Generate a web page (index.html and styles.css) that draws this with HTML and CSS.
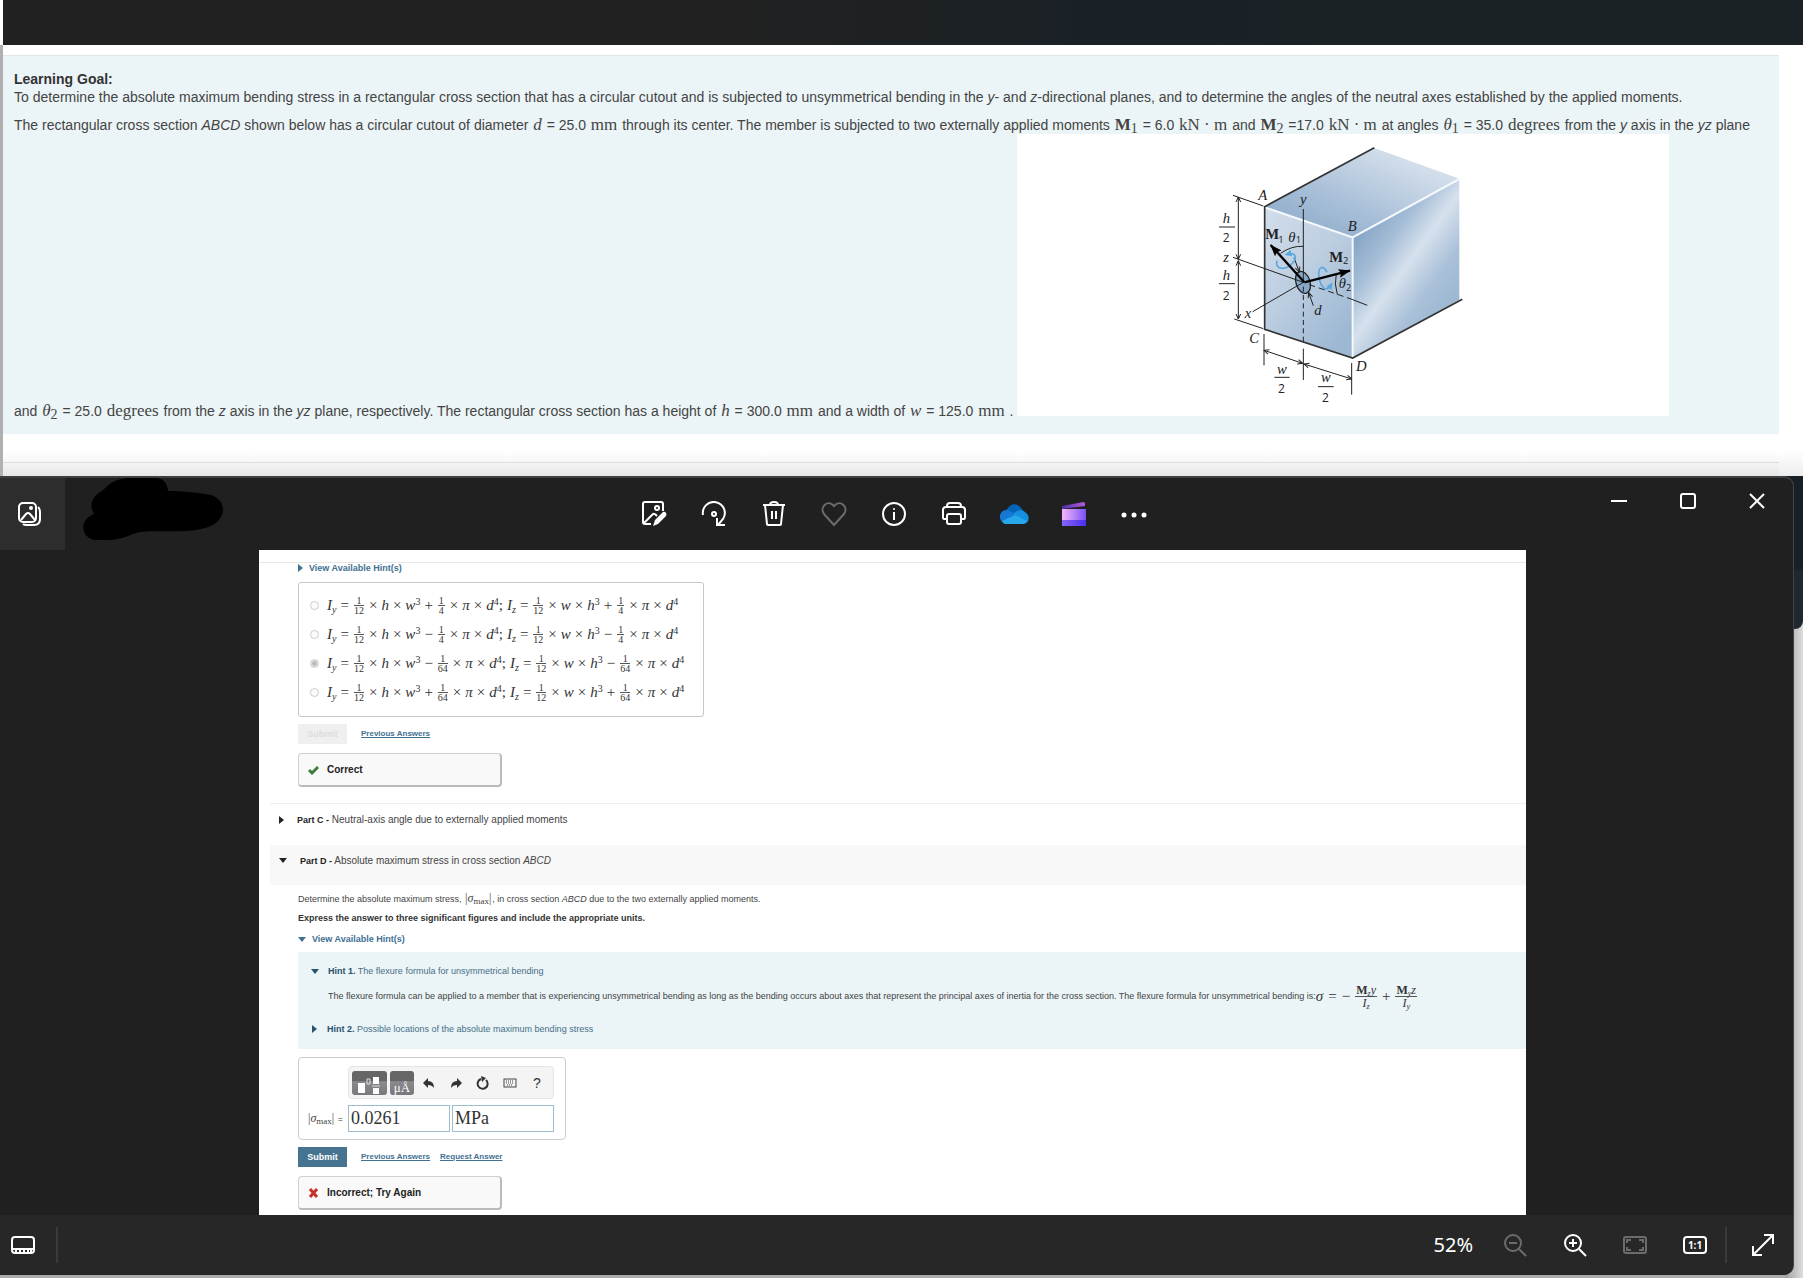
FILE: index.html
```html
<!DOCTYPE html>
<html lang="en">
<head>
<meta charset="utf-8">
<title>Unsymmetrical bending</title>
<link rel="stylesheet" href="styles.css">
</head>
<body>
<div class="browser-bar"></div>
<section class="problem-page">
  <div class="problem">
    <h1>Learning Goal:</h1>
    <p>To determine the absolute maximum bending stress in a rectangular cross section that has a circular cutout and is subjected to unsymmetrical bending in the <i>y</i>- and <i>z</i>-directional planes, and to determine the angles of the neutral axes established by the applied moments.</p>
    <p class="statement">The rectangular cross section <i>ABCD</i> shown below has a circular cutout of diameter <span class="m"><i>d</i></span> = 25.0 <span class="m">mm</span> through its center. The member is subjected to two externally applied moments <span class="m"><b>M</b><sub>1</sub></span> = 6.0 <span class="m">kN · m</span> and <span class="m"><b>M</b><sub>2</sub></span> =17.0 <span class="m">kN · m</span> at angles <span class="m"><i>θ</i><sub>1</sub></span> = 35.0 <span class="m">degrees</span> from the <i>y</i> axis in the <i>yz</i> plane<br>and <span class="m"><i>θ</i><sub>2</sub></span> = 25.0 <span class="m">degrees</span> from the <i>z</i> axis in the <i>yz</i> plane, respectively. The rectangular cross section has a height of <span class="m"><i>h</i></span> = 300.0 <span class="m">mm</span> and a width of <span class="m"><i>w</i></span> = 125.0 <span class="m">mm</span> .
      <svg class="figure" viewBox="-537 12 1956 846" role="img" aria-label="Rectangular beam with circular cutout">
        <defs>
          <linearGradient id="top" x1="0" y1="1" x2="1" y2="0"><stop offset="0" stop-color="#86a6c6"/><stop offset=".35" stop-color="#a4bcd6"/><stop offset=".8" stop-color="#d3deeb"/><stop offset="1" stop-color="#b4c7dc"/></linearGradient>
          <linearGradient id="front" x1="0" y1="0" x2=".7" y2="1"><stop offset="0" stop-color="#d2deeb"/><stop offset=".5" stop-color="#bdcee1"/><stop offset="1" stop-color="#9db8d3"/></linearGradient>
          <linearGradient id="side" gradientUnits="userSpaceOnUse" x1="490" y1="310" x2="780" y2="520"><stop offset="0" stop-color="#86a6c7"/><stop offset=".25" stop-color="#a6bed7"/><stop offset=".48" stop-color="#d6e1ed"/><stop offset=".75" stop-color="#a9c0d8"/><stop offset="1" stop-color="#9cb7d2"/></linearGradient>
          <marker id="thin" viewBox="0 0 20 20" refX="18" refY="10" markerWidth="20" markerHeight="20" markerUnits="userSpaceOnUse" orient="auto-start-reverse"><path d="M3 3L18 10L3 17" fill="none" stroke="#222" stroke-width="3"/></marker>
          <marker id="bold" viewBox="0 0 36 26" refX="34" refY="13" markerWidth="36" markerHeight="26" markerUnits="userSpaceOnUse" orient="auto"><path d="M0 0L36 13L0 26L6 13z" fill="#000"/></marker>
          <marker id="blue" viewBox="0 0 24 22" refX="12" refY="11" markerWidth="22" markerHeight="22" markerUnits="userSpaceOnUse" orient="auto"><path d="M0 0L24 11L0 22z" fill="#5aa9de"/></marker>
        </defs>
        <path d="M206 230L535 54L790 146L470 320z" fill="url(#top)"/>
        <path d="M206 230L470 320V684L206 598z" fill="url(#front)"/>
        <path d="M470 320L790 146V510L470 684z" fill="url(#side)"/>
        <path d="M206 232L470 322L790 147M470 322V684" fill="none" stroke="#f4f8fb" stroke-width="6"/>
        <g fill="none" stroke="#333" stroke-width="5"><path d="M535 53L206 230V598L470 684L799 508"/></g>
        <ellipse cx="321" cy="457" rx="21" ry="34" transform="rotate(-18 321 457)" fill="#87a8c9" stroke="#222" stroke-width="4"/>
        <g fill="none" stroke="#222" stroke-width="3">
          <path d="M111 196L202 228M111 382L322 457L170 545M115 567L202 596M322 237V457M204 612V706M322 656V750M467 699V794"/>
          <path d="M322 470V640" stroke-dasharray="15 10"/><path d="M340 464L465 507" stroke-dasharray="18 12"/><path d="M465 507L514 526"/>
          <path d="M254 370Q286 347 322 349M421 430Q414 462 424 494"/>
          <path d="M127 201V388" marker-start="url(#thin)" marker-end="url(#thin)"/><path d="M127 392V567" marker-start="url(#thin)" marker-end="url(#thin)"/>
          <path d="M204 661L320 700" marker-start="url(#thin)" marker-end="url(#thin)"/><path d="M324 702L467 747" marker-start="url(#thin)" marker-end="url(#thin)"/>
          <path d="M294 383L310 426" marker-end="url(#thin)"/><path d="M352 527L338 488" marker-end="url(#thin)"/>
          <path d="M69 291H117M69 461H117M235 742H281M366 770H413"/>
        </g>
        <g fill="none" stroke="#5aa9de" stroke-width="5"><path d="M243 392C236 420 268 421 287 402C306 383 298 366 276 372" marker-end="url(#blue)"/><path d="M393 426C380 401 365 413 369 440C373 470 390 490 404 466" marker-end="url(#blue)"/></g>
        <g fill="none" stroke="#000" stroke-width="7"><path d="M325 457L224 345" marker-end="url(#bold)"/><path d="M325 457L462 422" marker-end="url(#bold)"/></g>
        <g class="fig-label" font-size="44">
          <g font-style="italic"><text x="187" y="209">A</text><text x="455" y="303">B</text><text x="160" y="638">C</text><text x="480" y="722">D</text><text x="312" y="222">y</text><text x="82" y="395">z</text><text x="146" y="563">x</text><text x="355" y="554">d</text><text x="80" y="280">h</text><text x="80" y="451">h</text><text x="243" y="731">w</text><text x="375" y="757">w</text><text x="277" y="335">θ</text><text x="428" y="474">θ</text></g>
          <text x="208" y="328" font-weight="bold">M</text><text x="400" y="397" font-weight="bold">M</text>
          <g class="fig-num"><text x="80" y="337">2</text><text x="80" y="509">2</text><text x="246" y="789">2</text><text x="378" y="817">2</text><g class="fig-sub"><text x="247" y="338">1</text><text x="299" y="340">1</text><text x="441" y="403">2</text><text x="450" y="482">2</text></g></g>
        </g>
      </svg></p>
  </div>
  <div class="next-part"></div>
</section>

<div class="desktop">
<main class="viewer">
  <header class="viewer-head">
    <div class="head-left">
      <button class="tab" aria-label="Gallery"><svg width="24" height="26" viewBox="0 0 24 26"><rect x="2" y="2" width="17" height="19" rx="4"/><path d="M4 19l5-6q2-2 4 0l5 6M21 6q2 2 2 5v7q0 6-6 6H10q-3 0-4-1"/><circle cx="14" cy="7" r="1" fill="#fff"/></svg></button>
      <svg class="scribble" width="142" height="62" viewBox="82 477 142 62"><path d="M94 513C89 505 91 496 102 490C110 482 117 477 130 477L156 477C163 477 168 483 168 490C184 490 199 492 211 494C228 500 226 518 211 525C192 533 164 529 140 531C130 533 123 539 108 539L96 539C82 538 77 520 94 513z" fill="#000"/></svg>
    </div>
    <div class="tools">
      <button aria-label="Edit"><svg width="26" height="26" viewBox="0 0 26 26"><path d="M10 23H4q-2 0-2-2V3q0-2 2-2h16q2 0 2 2v7M3 22l9-9q1-1 3 1l1 1"/><circle cx="16" cy="7" r="2"/><path d="M12 25l2-6 8-8q2-1 3 1 1 1 0 3l-8 8z" fill="#fff" stroke="none"/></svg></button>
      <button aria-label="Rotate"><svg width="26" height="26" viewBox="0 0 26 26"><path d="M2 14A11 11 0 1 1 22 18L17 24M16 17v7h8"/><circle cx="13" cy="13" r="2"/></svg></button>
      <button aria-label="Delete"><svg width="26" height="26" viewBox="0 0 26 26"><path d="M2 4h22M9 4q0-3 4-3t4 3M4 4l2 19q0 1 2 1h10q2 0 2-1l2-19M11 10v8M15 10v8"/></svg></button>
      <button class="dim" aria-label="Favorite"><svg width="26" height="26" viewBox="0 0 26 26"><path d="M13 24L3 13C-2 6 7-2 13 5C19-2 28 6 23 13z"/></svg></button>
      <button aria-label="Info"><svg width="26" height="26" viewBox="0 0 26 26"><circle cx="13" cy="13" r="11"/><path d="M13 11v8"/><circle cx="13" cy="8" r="1" stroke="none" fill="#fff"/></svg></button>
      <button aria-label="Print"><svg width="26" height="26" viewBox="0 0 26 26"><path d="M6 18H3q-1 0-1-2V9q0-3 3-3h16q3 0 3 3v7q0 2-1 2h-3M6 5q0-3 3-3h8q3 0 3 3"/><rect x="6" y="13" width="14" height="10" rx="2"/></svg></button>
      <button aria-label="OneDrive"><svg width="30" height="22" viewBox="0 0 30 22"><path d="M7 8C11-1 20-1 24 8L16 15z" fill="#0364b8" stroke="none"/><path d="M6 20C-1 19-1 8 7 7q4 0 7 3l8 5-9 5z" fill="#1478d4" stroke="none"/><path d="M14 11q7-7 12-2c6 4 4 11-1 12z" fill="#1490df" stroke="none"/><path d="M3 18L16 12l12 6q-2 3-4 3H6q-2 0-3-3z" fill="#28a8ea" stroke="none"/></svg></button>
      <button aria-label="Clipchamp"><svg width="26" height="26" viewBox="0 0 26 26"><defs><linearGradient id="clip" x2="1"><stop stop-color="#f3b5fb"/><stop offset=".5" stop-color="#b887f7"/><stop offset="1" stop-color="#7a50f5"/></linearGradient><linearGradient id="lid" x2="1"><stop stop-color="#4b2fa8"/><stop offset="1" stop-color="#b55ae0"/></linearGradient><linearGradient id="low" x2="1"><stop stop-color="#8765f8"/><stop offset="1" stop-color="#4a2fee"/></linearGradient></defs><path d="M1 5L22 1q2 0 2 2v2L1 8z" fill="url(#lid)" stroke="none"/><path d="M1 8h24v11H1z" fill="url(#clip)" stroke="none"/><path d="M1 19h24v6H1z" fill="url(#low)" stroke="none"/></svg></button>
      <button aria-label="More"><svg width="26" height="26" viewBox="0 0 26 26"><g fill="#fff" stroke="none"><circle cx="3" cy="14" r="2.500"/><circle cx="13" cy="14" r="2.500"/><circle cx="23" cy="14" r="2.500"/></g></svg></button>
    </div>
    <div class="window-controls">
      <button aria-label="Minimize"><svg width="16" height="16" viewBox="0 0 16 16"><path d="M0 8h16"/></svg></button>
      <button aria-label="Maximize"><svg width="16" height="16" viewBox="0 0 16 16"><rect x="1" y="1" width="14" height="14" rx="2"/></svg></button>
      <button aria-label="Close"><svg width="16" height="16" viewBox="0 0 16 16"><path d="M1 1l14 14M15 1L1 15"/></svg></button>
    </div>
  </header>

  <div class="stage">
    <article class="sheet">
      <div class="rule-top"></div>
      <div class="col">
        <a class="hints" href="#"><span class="tri right"></span>View Available Hint(s)</a>
        <form class="choices">
          <label><input type="radio" name="c" disabled><span class="eq"><span><i>I</i><sub><i>y</i></sub></span><span>=</span><span class="frac"><span>1</span><span>12</span></span><span>×</span><i>h</i><span>×</span><span><i>w</i><sup>3</sup></span><span>+</span><span class="frac"><span>1</span><span>4</span></span><span>×</span><i>π</i><span>×</span><span><i>d</i><sup>4</sup>;</span><span><i>I</i><sub><i>z</i></sub></span><span>=</span><span class="frac"><span>1</span><span>12</span></span><span>×</span><i>w</i><span>×</span><span><i>h</i><sup>3</sup></span><span>+</span><span class="frac"><span>1</span><span>4</span></span><span>×</span><i>π</i><span>×</span><span><i>d</i><sup>4</sup></span></span></label>
          <label><input type="radio" name="c" disabled><span class="eq"><span><i>I</i><sub><i>y</i></sub></span><span>=</span><span class="frac"><span>1</span><span>12</span></span><span>×</span><i>h</i><span>×</span><span><i>w</i><sup>3</sup></span><span>−</span><span class="frac"><span>1</span><span>4</span></span><span>×</span><i>π</i><span>×</span><span><i>d</i><sup>4</sup>;</span><span><i>I</i><sub><i>z</i></sub></span><span>=</span><span class="frac"><span>1</span><span>12</span></span><span>×</span><i>w</i><span>×</span><span><i>h</i><sup>3</sup></span><span>−</span><span class="frac"><span>1</span><span>4</span></span><span>×</span><i>π</i><span>×</span><span><i>d</i><sup>4</sup></span></span></label>
          <label><input type="radio" name="c" disabled checked><span class="eq"><span><i>I</i><sub><i>y</i></sub></span><span>=</span><span class="frac"><span>1</span><span>12</span></span><span>×</span><i>h</i><span>×</span><span><i>w</i><sup>3</sup></span><span>−</span><span class="frac"><span>1</span><span>64</span></span><span>×</span><i>π</i><span>×</span><span><i>d</i><sup>4</sup>;</span><span><i>I</i><sub><i>z</i></sub></span><span>=</span><span class="frac"><span>1</span><span>12</span></span><span>×</span><i>w</i><span>×</span><span><i>h</i><sup>3</sup></span><span>−</span><span class="frac"><span>1</span><span>64</span></span><span>×</span><i>π</i><span>×</span><span><i>d</i><sup>4</sup></span></span></label>
          <label><input type="radio" name="c" disabled><span class="eq"><span><i>I</i><sub><i>y</i></sub></span><span>=</span><span class="frac"><span>1</span><span>12</span></span><span>×</span><i>h</i><span>×</span><span><i>w</i><sup>3</sup></span><span>+</span><span class="frac"><span>1</span><span>64</span></span><span>×</span><i>π</i><span>×</span><span><i>d</i><sup>4</sup>;</span><span><i>I</i><sub><i>z</i></sub></span><span>=</span><span class="frac"><span>1</span><span>12</span></span><span>×</span><i>w</i><span>×</span><span><i>h</i><sup>3</sup></span><span>+</span><span class="frac"><span>1</span><span>64</span></span><span>×</span><i>π</i><span>×</span><span><i>d</i><sup>4</sup></span></span></label>
        </form>
        <div class="actions"><button class="submit" disabled>Submit</button><a href="#">Previous Answers</a></div>
        <div class="feedback"><svg width="11" height="10" viewBox="0 0 11 10"><path d="M1 5l3 3 6-6" fill="none" stroke="#3f7d3a" class="check"/></svg>Correct</div>
      </div>

      <section class="part closed"><span class="tri right"></span><h2><b>Part C -</b> Neutral-axis angle due to externally applied moments</h2></section>
      <section class="part open"><span class="tri down"></span><h2><b>Part D -</b> Absolute maximum stress in cross section <i>ABCD</i></h2></section>

      <div class="col">
        <p class="ask">Determine the absolute maximum stress, <span class="m">|<i>σ</i><sub>max</sub>|</span>, in cross section <i>ABCD</i> due to the two externally applied moments.</p>
        <p class="express">Express the answer to three significant figures and include the appropriate units.</p>
        <a class="hints" href="#"><span class="tri down"></span>View Available Hint(s)</a>
        <div class="hint-box">
          <h3><span class="tri down"></span><span><b>Hint 1.</b> The flexure formula for unsymmetrical bending</span></h3>
          <div class="hint-text"><span>The flexure formula can be applied to a member that is experiencing unsymmetrical bending as long as the bending occurs about axes that represent the principal axes of inertia for the cross section. The flexure formula for unsymmetrical bending is:</span><span class="eq"><i>σ</i><span>=</span><span class="neg">−</span><span class="frac wide"><span><b>M</b><sub><i>z</i></sub><i>y</i></span><span><i>I</i><sub><i>z</i></sub></span></span><span>+</span><span class="frac wide"><span><b>M</b><sub><i>y</i></sub><i>z</i></span><span><i>I</i><sub><i>y</i></sub></span></span></span></div>
          <h3 class="shut"><span class="tri right"></span><span><b>Hint 2.</b> Possible locations of the absolute maximum bending stress</span></h3>
        </div>
        <form class="answer">
          <div class="editor">
            <button type="button" class="key wide-key" aria-label="Templates"><svg width="35" height="24" viewBox="0 0 35 24"><path d="M6 12h7v10H6zM21 6h6v7h-6zM21 17h6v6h-6z" fill="#fff"/><path class="line" d="M15 8h3v5h-3z"/><path class="line" d="M20 15h8"/></svg></button>
            <button type="button" class="key">μÅ</button>
            <button type="button" class="ico" aria-label="Undo"><svg width="12" height="12" viewBox="0 0 12 12"><path d="M5 1v3q6 0 6 7-2-3-6-3v3L0 6z" fill="#333"/></svg></button>
            <button type="button" class="ico" aria-label="Redo"><svg width="12" height="12" viewBox="0 0 12 12"><path d="M7 1v3q-6 0-6 7 2-3 6-3v3l5-5z" fill="#333"/></svg></button>
            <button type="button" class="ico" aria-label="Reset"><svg class="reset" width="14" height="14" viewBox="0 0 14 14"><path class="ring" d="M10 4a5 5 0 1 1-5-1"/><path d="M5 0l5 2-4 4z" fill="#333"/></svg></button>
            <button type="button" class="ico" aria-label="Keyboard"><svg class="kbd" width="14" height="10" viewBox="0 0 14 10"><rect x="1" y="1" width="12" height="8"/><path d="M3 3h8M3 5h8M4 7h6" stroke-dasharray="1 1"/></svg></button>
            <button type="button" class="ico help">?</button>
          </div>
          <label for="val"><span class="m">|<i>σ</i><sub>max</sub>|</span> =</label>
          <input id="val" value="0.0261"><input aria-label="Units" value="MPa">
        </form>
        <div class="actions"><button class="submit">Submit</button><a href="#">Previous Answers</a><a href="#">Request Answer</a></div>
        <div class="feedback"><svg width="11" height="10" viewBox="0 0 11 10"><path d="M2 1l7 8M9 1L2 9" fill="none" stroke="#c5302c" class="cross"/></svg>Incorrect; Try Again</div>
      </div>
    </article>
  </div>

  <footer class="viewer-foot">
    <button class="film" aria-label="Filmstrip"><svg width="26" height="20" viewBox="0 0 26 20"><rect x="2" y="2" width="22" height="16" rx="3"/><path d="M2 14h22M6 14v4M10 14v4M14 14v4M18 14v4M21 14v4"/></svg></button>
    <span class="bar"></span>
    <span class="zoom">52%</span>
    <button class="dim" aria-label="Zoom out"><svg width="26" height="26" viewBox="0 0 26 26"><circle cx="11" cy="11" r="8"/><path d="M7 11h8M17 17l7 7"/></svg></button>
    <button aria-label="Zoom in"><svg width="26" height="26" viewBox="0 0 26 26"><circle cx="11" cy="11" r="8"/><path d="M7 11h8M11 7v8M17 17l7 7"/></svg></button>
    <button class="dim" aria-label="Fit"><svg width="26" height="20" viewBox="0 0 26 20"><rect x="2" y="2" width="22" height="16" rx="2"/><path d="M5 8V5h4M17 5h4v3M5 12v3h4M17 15h4v-3"/></svg></button>
    <button aria-label="Actual size"><span class="one">1:1</span></button>
    <span class="bar"></span>
    <button class="full" aria-label="Full screen"><svg width="24" height="24" viewBox="0 0 24 24"><path d="M2 22L22 2M13 2h9v9M2 13v9h9"/></svg></button>
  </footer>
</main>
</div>
</body>
</html>
```
FILE: styles.css
```css
* { box-sizing: border-box; }
body { margin: 0; min-height: 100vh; display: flex; flex-direction: column; background: #fff; font-family: "Liberation Sans", Arial, sans-serif; color: #444; }
h1, h2, h3, p { margin: 0; font-weight: normal; }
button { margin: 0; padding: 0; border: 0; background: none; font-family: inherit; display: flex; align-items: center; justify-content: center; }
svg { display: block; }
sub, sup { line-height: 0; }

.browser-bar { height: 45px; margin-left: 3px; background: linear-gradient(90deg, #212121 40%, #1a2126 60%, #1a2225); }
.problem-page { border-left: 3px solid #b0b0b0; padding: 10px 24px 0 0; background: linear-gradient(#fff 94%, #ededed); }
.problem { border-top: 1px solid #dfe6e6; background: #ebf4f6; padding: 15px 11px 14px; font-size: 14px; line-height: 18px; }
.problem h1 { font-size: 14px; line-height: 17px; font-weight: bold; color: #333; }
.statement { margin-top: 10px; }
.m { padding: 0 1px; font-family: "Liberation Serif", "Times New Roman", serif; font-size: 17px; line-height: 0; }
.m sub { font-size: 14px; vertical-align: -3px; }
.figure { display: inline-block; width: 652px; height: 282px; background: #fff; vertical-align: baseline; }
.fig-label { font-family: "Liberation Serif", serif; fill: #222; }
.fig-num { font-family: "Open Sans", sans-serif; font-size: 36px; }
.fig-sub { font-size: 28px; }
.next-part { height: 14px; margin-top: 28px; border-top: 1px solid #ddd; background: linear-gradient(#f5f5f5, #e6e6e6); }

.desktop { position: relative; flex: 1; display: flex; padding: 0 9px 3px 0; background: linear-gradient(90deg, #aaa 99%, #a0a0a0 99%, #ddd); }
.desktop::before { content: ""; position: absolute; top: 0; right: 0; width: 30px; height: 153px; background: linear-gradient(#182026 60%, #20272e 62%); border-radius: 0 0 8px 0; }
.viewer { position: relative; flex: 1; display: flex; flex-direction: column; background: #202020; border-top: 2px solid #3c4042; border-right: 1px solid #444; border-radius: 0 10px 10px 0; overflow: hidden; color: #fff; }
.viewer svg { fill: none; stroke: #fff; stroke-width: 2px; }
.viewer .sheet svg, .viewer .scribble { stroke: none; }
.viewer-head { display: grid; grid-template-columns: 1fr auto 1fr; height: 72px; padding-right: 5px; }
.head-left { display: flex; align-items: flex-start; gap: 17px; }
.tab { width: 65px; height: 72px; background: #2d2d2d; padding-right: 8px; }
.tools { display: flex; align-items: center; }
.tools button { width: 60px; height: 60px; }
.viewer .dim svg { stroke: #6c6c6c; }
.window-controls { display: flex; justify-content: flex-end; gap: 6px; }
.window-controls button { width: 63px; height: 46px; }
.stage { flex: 1; display: flex; padding: 0 267px 0 259px; }
.sheet { flex: 1; min-width: 0; padding-bottom: 4px; background: #fff; color: #444; font-size: 9px; line-height: 12px; }
.rule-top { height: 13px; border-bottom: 1px solid #e8e8e8; }
.col { padding-left: 39px; }

.tri { flex: none; width: 0; height: 0; border: 4px solid transparent; }
.tri.right { border-left: 5px solid; border-right: 0; margin-right: 4px; }
.tri.down { border-top: 5px solid; border-bottom: 0; }
.hints { display: flex; align-items: center; gap: 6px; line-height: 10px; color: #3f7193; font-weight: bold; text-decoration: none; }
.hints .tri.right { margin-right: 0; }
.choices { width: 406px; margin-top: 9px; padding: 8px 0 9px 11px; border: 1px solid #c8c8c8; border-radius: 3px; }
.choices label { display: flex; align-items: center; height: 29px; gap: 8px; }
.choices input { flex: none; appearance: none; width: 9px; height: 9px; margin: 0; border: 1px solid #ccc; border-radius: 50%; background: #fafafa; }
.choices input:checked { background: radial-gradient(circle, #bbb 2px, #e8e8e8 3px); }
.eq { display: inline-flex; align-items: center; gap: 4px; font-family: "Liberation Serif", serif; font-size: 15px; line-height: 15px; white-space: nowrap; color: #333; }
.eq sub, .eq sup { font-size: 10px; }
.eq sub { vertical-align: -3px; }
.eq sup { vertical-align: 5px; }
.frac { display: inline-flex; flex-direction: column; align-items: center; margin: 0 1px; font-size: 10px; line-height: 9px; }
.frac > span:first-child { border-bottom: 1px solid #555; padding: 0 1px; align-self: stretch; text-align: center; }
.actions { display: flex; align-items: center; margin-top: 7px; height: 20px; gap: 10px; }
.actions a { color: #3f7193; font-size: 8px; font-weight: bold; }
.submit { width: 49px; height: 20px; margin-right: 4px; background: #46738f; color: #fff; font-size: 9px; font-weight: bold; }
.submit:disabled { background: #efefef; color: #ddd; }
.feedback { display: flex; align-items: center; gap: 8px; width: 204px; height: 34px; margin-top: 9px; padding-left: 9px; border: 1px solid #d0d0d0; border-right: 2px solid #bbb; border-bottom: 2px solid #bbb; border-radius: 4px; background: #f9f9f9; color: #222; font-size: 10px; font-weight: bold; }
.viewer .check { stroke-width: 3px; }
.viewer .cross { stroke-width: 3px; }
.part { display: flex; align-items: flex-start; margin-left: 11px; padding: 10px 0 0 9px; }
.part h2 { font-size: 10px; line-height: 12px; }
.part b { font-size: 9px; color: #222; }
.part .tri { margin-top: 3px; color: #222; }
.part .tri.right { margin-top: 2px; }
.part.closed { gap: 9px; height: 42px; margin-top: 16px; border-top: 1px solid #eee; }
.part.open { gap: 13px; height: 40px; background: #f8f8f8; }
.ask, .express { line-height: 14px; margin-top: 7px; }
.express { margin: 5px 0 9px; font-weight: bold; color: #333; }
.sheet .m { font-size: 12px; }
.sheet .m sub { font-size: 9px; vertical-align: -2px; }
.hint-box { margin-top: 8px; padding: 13px 0 14px 13px; background: #ebf4f6; }
.hint-box h3 { display: flex; align-items: center; gap: 9px; font-size: 9px; line-height: 12px; color: #486f87; }
.hint-box b, .hint-box .tri { color: #2a536e; }
.hint-box .eq b { color: #333; }
.hint-text { display: flex; align-items: center; height: 26px; margin: 6px 0 14px 17px; white-space: nowrap; }
.hint-text .eq { gap: 5px; font-size: 15px; }
.hint-text .frac { margin: 0; font-size: 12px; line-height: 12px; }
.hint-text .frac sub { font-size: 8px; vertical-align: -2px; }
.hint-box .shut { gap: 6px; padding-left: 1px; }
.answer { display: grid; grid-template-columns: 39px 102px 102px; column-gap: 2px; row-gap: 6px; align-items: center; width: 268px; margin-top: 8px; padding: 8px 0 7px 8px; border: 1px solid #ccc; border-radius: 4px; }
.answer label { white-space: nowrap; }
.editor { grid-column: 2 / 4; display: flex; align-items: center; gap: 3px; height: 33px; padding-left: 3px; border: 1px solid #e4e4e4; border-radius: 4px; background: #f4f4f4; }
.editor .line { fill: none; stroke: #ddd; stroke-width: 1px; }
.kbd rect, .kbd path { fill: none; stroke: #444; stroke-width: 1px; }
.reset .ring { fill: none; stroke: #333; stroke-width: 2px; }
.key { width: 24px; height: 24px; border-radius: 3px; background: linear-gradient(#666 40%, #8b8b8e 45%, #77777c); color: #fff; font-family: "Liberation Serif", serif; font-size: 13px; align-items: flex-end; line-height: 14px; }
.wide-key { width: 35px; }
.ico { width: 24px; height: 24px; }
.help { color: #333; font-size: 14px; }
.answer input { width: 102px; height: 27px; padding: 0 2px; border: 1px solid #9dbccd; font-family: "Liberation Serif", serif; font-size: 18px; color: #333; }

.viewer-foot { display: flex; align-items: center; height: 60px; background: #272727; }
.viewer-foot button { width: 60px; height: 48px; }
.viewer-foot .film { width: 46px; margin-right: 10px; }
.bar { width: 2px; height: 36px; background: #3a3a3a; }
.zoom { margin: 0 12px 0 auto; font-family: "Noto Sans", sans-serif; font-size: 20px; line-height: 24px; }
.viewer-foot .one { width: 24px; height: 18px; border: 2px solid #fff; border-radius: 4px; color: #fff; font-family: "Noto Sans", sans-serif; font-size: 10px; font-weight: bold; line-height: 14px; }
.viewer-foot .full { width: 66px; padding-left: 6px; }
```
